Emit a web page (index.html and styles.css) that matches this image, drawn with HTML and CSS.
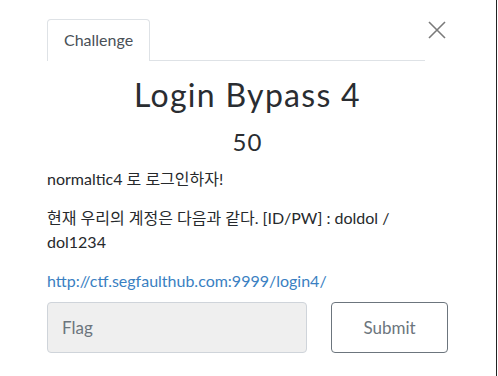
FILE: index.html
```html
<!DOCTYPE html>
<html lang="ko">
<head>
    <meta charset="UTF-8">
    <title>Login Bypass 4</title>
    <link rel="stylesheet" href="styles.css">
</head>
<body>
    <div class="modal">
        <div class="modal-head">
            <ul class="nav-tabs">
                <li class="tab active">Challenge</li>
            </ul>
            <button class="close" aria-label="Close">
                <svg width="18" height="18" viewBox="0 0 18 18">
                    <path d="M1 1 L17 17 M17 1 L1 17" stroke="#7a7a7a" stroke-width="1.6" fill="none"/>
                </svg>
            </button>
        </div>

        <div class="challenge">
            <h2 class="challenge-name">Login Bypass 4</h2>
            <h3 class="challenge-value">50</h3>

            <div class="challenge-desc">
                <p>normaltic4 로 로그인하자!</p>
                <p>현재 우리의 계정은 다음과 같다. [ID/PW] : doldol / dol1234</p>
                <p class="link"><a href="#">http://ctf.segfaulthub.com:9999/login4/</a></p>
            </div>

            <form class="submit-row">
                <input type="text" class="flag-input" placeholder="Flag">
                <button type="submit" class="btn-submit">Submit</button>
            </form>
        </div>
    </div>
</body>
</html>
```

FILE: styles.css
```css
* {
    margin: 0;
    padding: 0;
    box-sizing: border-box;
}

body {
    font-family: Lato, "Noto Sans CJK KR", sans-serif;
    font-size: 16px;
    line-height: 24px;
    color: #26292c;
    background: white;
    width: 498px;
    height: 376px;
}

.modal {
    width: 497px;
    height: 376px;
    border-right: 1px solid #222;
    padding: 19px 50px 0 47px;
}

.modal-head {
    display: flex;
    align-items: flex-start;
}

.nav-tabs {
    list-style: none;
    display: flex;
    width: 378px;
    border-bottom: 1px solid #dee2e6;
}

.tab {
    padding: 8px 16px;
    border: 1px solid #dee2e6;
    border-bottom: none;
    border-radius: 4px 4px 0 0;
    background: white;
    color: #495057;
    margin-bottom: -1px;
    padding-bottom: 9px;
}

.close {
    background: none;
    border: none;
    margin: 2px 0 0 3px;
    width: 18px;
    height: 18px;
    cursor: pointer;
}

.close svg {
    display: block;
}

.challenge {
    width: 401px;
}

.challenge-name {
    text-align: center;
    font-size: 32px;
    font-weight: 400;
    line-height: 38px;
    margin-top: 15px;
    letter-spacing: 1.3px;
    color: #2a2d31;
}

.challenge-value {
    text-align: center;
    font-size: 24px;
    font-weight: 400;
    line-height: 29px;
    margin-top: 13px;
    letter-spacing: 1px;
    color: #2a2d31;
}

.challenge-desc {
    margin-top: 11px;
}

.challenge-desc p {
    margin-bottom: 15px;
}

.challenge-desc p.link {
    margin-bottom: 9px;
}

.challenge-desc a {
    color: #3a7fc2;
    text-decoration: none;
}

.submit-row {
    display: flex;
    justify-content: space-between;
}

.flag-input {
    width: 260px;
    height: 51px;
    padding: 0 14px;
    font-family: Lato, sans-serif;
    font-size: 17px;
    background: #efefef;
    border: 1px solid #cfd4da;
    border-radius: 4px;
    color: #495057;
}

.flag-input::placeholder {
    color: #6c757d;
}

.btn-submit {
    width: 117px;
    height: 51px;
    font-family: Lato, sans-serif;
    font-size: 17px;
    color: #6c757d;
    background: white;
    border: 1px solid #6c757d;
    border-radius: 4px;
    cursor: pointer;
}
```
